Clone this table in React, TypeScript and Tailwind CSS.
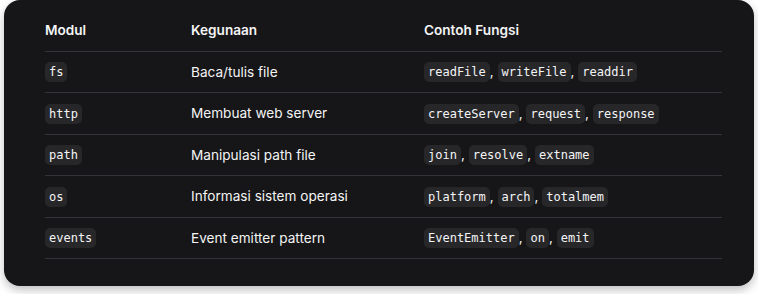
const rows = [
  { mod: 'fs', use: 'Baca/tulis file', fns: ['readFile', 'writeFile', 'readdir'] },
  { mod: 'http', use: 'Membuat web server', fns: ['createServer', 'request', 'response'] },
  { mod: 'path', use: 'Manipulasi path file', fns: ['join', 'resolve', 'extname'] },
  { mod: 'os', use: 'Informasi sistem operasi', fns: ['platform', 'arch', 'totalmem'] },
  { mod: 'events', use: 'Event emitter pattern', fns: ['EventEmitter', 'on', 'emit'] },
]

function Code({ children }: { children: string }) {
  return (
    <code className="inline-block rounded-[5px] bg-[#27272a] px-1 py-0.5 font-['DejaVu_Sans_Mono',monospace] text-[12px] leading-[16px] text-zinc-100">
      {children}
    </code>
  )
}

export default function App() {
  return (
    <div className="min-h-[294px] bg-white px-1 font-['Inter',sans-serif]">
      <div className="h-[286px] rounded-2xl bg-[#161618] pl-[41px] pr-[32px] pt-[9px] shadow-[0_4px_10px_rgba(0,0,0,0.25)]">
        <table className="w-full border-collapse text-left text-[13.6px] text-zinc-100">
          <thead>
            <tr className="h-[42px] border-b border-[#333338]">
              <th className="w-[146px] font-semibold">Modul</th>
              <th className="w-[233px] font-semibold">Kegunaan</th>
              <th className="font-semibold">Contoh Fungsi</th>
            </tr>
          </thead>
          <tbody>
            {rows.map((r) => (
              <tr key={r.mod} className="h-[41.5px] border-b border-[#333338]">
                <td>
                  <Code>{r.mod}</Code>
                </td>
                <td>{r.use}</td>
                <td>
                  {r.fns.map((f, i) => (
                    <span key={f}>
                      <Code>{f}</Code>
                      {i < r.fns.length - 1 && ', '}
                    </span>
                  ))}
                </td>
              </tr>
            ))}
          </tbody>
        </table>
      </div>
    </div>
  )
}
